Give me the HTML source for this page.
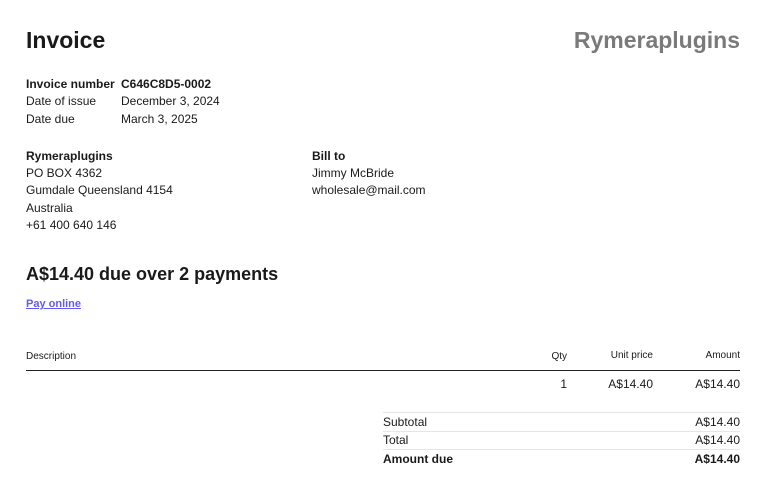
<!DOCTYPE html>
<html><head><style>
body{margin:0;width:768px;height:496px;background:#fff;font-family:"Liberation Sans",sans-serif;color:#1a1a1a;position:relative;overflow:hidden}
.a{position:absolute;white-space:nowrap;line-height:1}
.s{font-size:12px}
.b{font-weight:bold}
.r{text-align:right}
.ln{position:absolute;height:1px;background:#e6e6e6}
</style></head><body>
<div class="a b" style="left:26px;top:29px;font-size:23px">Invoice</div>
<div class="a b" style="right:28px;top:29px;font-size:23px;color:#7a7a7a">Rymeraplugins</div>

<div class="a s b" style="left:26px;top:78px">Invoice number</div>
<div class="a s b" style="left:121px;top:78px">C646C8D5-0002</div>
<div class="a s" style="left:26px;top:95px">Date of issue</div>
<div class="a s" style="left:121px;top:95px">December 3, 2024</div>
<div class="a s" style="left:26px;top:113px">Date due</div>
<div class="a s" style="left:121px;top:113px">March 3, 2025</div>

<div class="a s b" style="left:26px;top:150px">Rymeraplugins</div>
<div class="a s" style="left:26px;top:167px">PO BOX 4362</div>
<div class="a s" style="left:26px;top:184px">Gumdale Queensland 4154</div>
<div class="a s" style="left:26px;top:202px">Australia</div>
<div class="a s" style="left:26px;top:219px">+61 400 640 146</div>

<div class="a s b" style="left:312px;top:150px">Bill to</div>
<div class="a s" style="left:312px;top:167px">Jimmy McBride</div>
<div class="a s" style="left:312px;top:184px">wholesale@mail.com</div>

<div class="a b" style="left:26px;top:265px;font-size:18px">A$14.40 due over 2 payments</div>
<div class="a b" style="left:26px;top:299px;font-size:11px;color:#625afa;text-decoration:underline">Pay online</div>

<div class="a" style="left:26px;top:352px;font-size:10px">Description</div>
<div class="a r" style="right:201px;top:352px;font-size:10px">Qty</div>
<div class="a r" style="right:115px;top:351px;font-size:10px">Unit price</div>
<div class="a r" style="right:28px;top:351px;font-size:10px">Amount</div>
<div style="position:absolute;left:26px;top:370px;width:714px;height:1px;background:#222"></div>
<div class="a s r" style="right:201px;top:378px">1</div>
<div class="a s r" style="right:115px;top:378px">A$14.40</div>
<div class="a s r" style="right:28px;top:378px">A$14.40</div>

<div class="ln" style="left:383px;top:412px;width:357px"></div>
<div class="a s" style="left:383px;top:416px">Subtotal</div>
<div class="a s r" style="right:28px;top:416px">A$14.40</div>
<div class="ln" style="left:383px;top:431px;width:357px"></div>
<div class="a s" style="left:383px;top:434px">Total</div>
<div class="a s r" style="right:28px;top:434px">A$14.40</div>
<div class="ln" style="left:383px;top:449px;width:357px"></div>
<div class="a s b" style="left:383px;top:453px">Amount due</div>
<div class="a s b r" style="right:28px;top:453px">A$14.40</div>
</body></html>
